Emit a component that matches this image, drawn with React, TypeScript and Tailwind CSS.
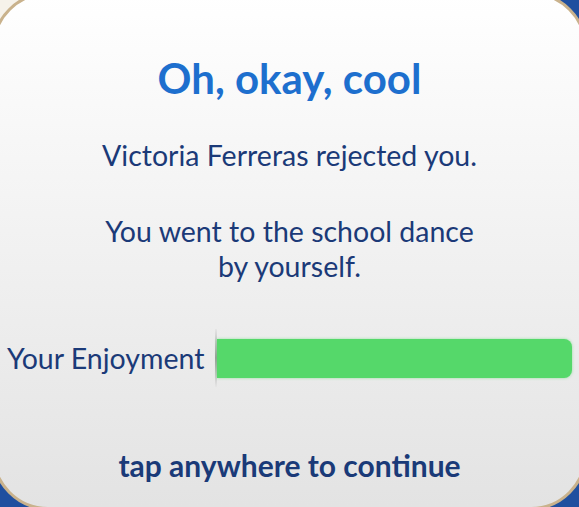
import React from 'react';

const App = () => {
  return (
    <div
      className="w-[579px] h-[507px] overflow-hidden bg-[linear-gradient(135deg,#f6f2ea_0%,#f6f2ea_8%,#1f4f9f_14%)]"
      style={{ fontFamily: 'Lato, "Open Sans", sans-serif' }}
    >
      <div className="-mx-[8px] -mt-[8px] h-[518px] rounded-[56px] border-[3px] border-[#c9b28c] bg-gradient-to-b from-[#ffffff] to-[#e3e3e3] flex flex-col items-center">
        <h1 className="mt-[58px] text-[42px] leading-[50px] font-bold text-[#1d6fce]">Oh, okay, cool</h1>

        <p className="mt-[35px] text-[28.5px] leading-[35px] text-[#1b3a78]">Victoria Ferreras rejected you.</p>

        <p className="mt-[41px] text-[28.5px] leading-[35px] text-[#1b3a78] text-center">
          You went to the school dance
          <br />
          by yourself.
        </p>

        <div className="mt-[45px] self-stretch flex items-center pl-[12px]">
          <span className="text-[28.5px] leading-[35px] text-[#1b3a78] whitespace-nowrap">Your Enjoyment</span>
          <div className="ml-[11px] flex items-center h-[58px]">
            <div className="w-[2px] h-full bg-gradient-to-b from-[#e6e6e6] via-[#9a9a9a] to-[#e6e6e6]" />
            <div className="w-[355px] h-[39px] bg-[#55d86a] rounded-r-[8px] shadow-[0_0_3px_rgba(85,216,106,0.6)]" />
          </div>
        </div>

        <p className="mt-[60px] text-[30px] leading-[36px] font-bold text-[#1a3a78]">tap anywhere to continue</p>
      </div>
    </div>
  );
};

export default App;
